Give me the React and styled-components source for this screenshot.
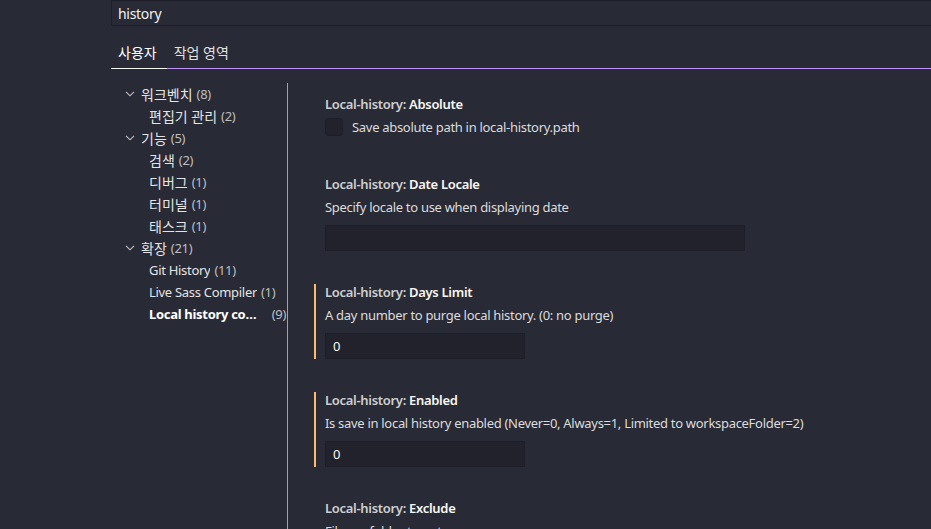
import styled, { createGlobalStyle } from 'styled-components'

const GlobalStyle = createGlobalStyle`
  html, body {
    margin: 0;
    padding: 0;
    background: #282a36;
  }
  * {
    box-sizing: border-box;
  }
`

const tree = [
  { label: '워크벤치', count: 8, level: 1, ko: true },
  { label: '편집기 관리', count: 2, level: 2, ko: true },
  { label: '기능', count: 5, level: 1, ko: true },
  { label: '검색', count: 2, level: 2, ko: true },
  { label: '디버그', count: 1, level: 2, ko: true },
  { label: '터미널', count: 1, level: 2, ko: true },
  { label: '태스크', count: 1, level: 2, ko: true },
  { label: '확장', count: 21, level: 1, ko: true },
  { label: 'Git History', count: 11, level: 2 },
  { label: 'Live Sass Compiler', count: 1, level: 2 },
  { label: 'Local history configuration', count: 9, level: 2, active: true },
]

function Chevron() {
  return (
    <ChevronIcon width="10" height="6" viewBox="0 0 10 6">
      <path d="M1 0.8 L5 4.8 L9 0.8" fill="none" stroke="#c5c5c5" strokeWidth="1.1" />
    </ChevronIcon>
  )
}

export default function App() {
  return (
    <Page>
      <GlobalStyle />
      <Header>
        <SearchBox>history</SearchBox>
        <Tabs>
          <Tab $active>사용자</Tab>
          <Tab>작업 영역</Tab>
        </Tabs>
      </Header>
      <Body>
        <Tree>
          {tree.map((item) => (
            <TreeRow key={item.label} $level={item.level}>
              {item.level === 1 && <Chevron />}
              <TreeLabel $active={item.active} $ko={item.ko}>
                {item.label}
              </TreeLabel>
              <TreeCount $spread={item.active}>({item.count})</TreeCount>
            </TreeRow>
          ))}
        </Tree>
        <Settings>
          <Item>
            <Title>
              Local-history: <b>Absolute</b>
            </Title>
            <CheckRow>
              <Checkbox />
              <Desc>Save absolute path in local-history.path</Desc>
            </CheckRow>
          </Item>
          <Item>
            <Title>
              Local-history: <b>Date Locale</b>
            </Title>
            <Desc>Specify locale to use when displaying date</Desc>
            <Input $wide />
          </Item>
          <Item $modified>
            <Title>
              Local-history: <b>Days Limit</b>
            </Title>
            <Desc>A day number to purge local history. (0: no purge)</Desc>
            <Input>0</Input>
          </Item>
          <Item $modified>
            <Title>
              Local-history: <b>Enabled</b>
            </Title>
            <Desc>Is save in local history enabled (Never=0, Always=1, Limited to workspaceFolder=2)</Desc>
            <Input>0</Input>
          </Item>
          <Item>
            <Title>
              Local-history: <b>Exclude</b>
            </Title>
            <Desc>Files or folder to not save</Desc>
          </Item>
        </Settings>
      </Body>
    </Page>
  )
}

const Page = styled.div`
  width: 931px;
  height: 529px;
  overflow: hidden;
  background: #282a36;
  font-family: 'Noto Sans', 'Noto Sans CJK KR', sans-serif;
  font-size: 13px;
  letter-spacing: -0.3px;
  color: #e6e6e6;
  display: flex;
  flex-direction: column;
`

const Header = styled.div`
  padding-left: 111px;
  display: flex;
  flex-direction: column;
`

const SearchBox = styled.div`
  height: 26px;
  border: 1px solid #1d1e27;
  border-right: none;
  padding: 0 6px;
  display: flex;
  align-items: center;
  font-size: 14px;
  color: #f0f0f0;
  width: 900px;
`

const Tabs = styled.div`
  display: flex;
  margin-top: 9px;
  border-bottom: 1px solid #bd93f9;
`

const Tab = styled.div`
  height: 34px;
  padding: 0 10px 0 7px;
  display: flex;
  align-items: center;
  font-size: 14px;
  letter-spacing: 0;
  color: ${(p) => (p.$active ? '#ffffff' : '#e2e2e2')};
  margin-bottom: -1px;
  border-bottom: 1px solid ${(p) => (p.$active ? '#f8f8f2' : 'transparent')};
`

const Body = styled.div`
  flex: 1;
  display: flex;
  min-height: 0;
`

const Tree = styled.div`
  width: 287px;
  padding: 14px 0 0 111px;
  display: flex;
  flex-direction: column;
`

const TreeRow = styled.div`
  height: 22px;
  display: flex;
  align-items: center;
  padding-left: ${(p) => (p.$level === 1 ? '14px' : '38px')};
  padding-right: 1px;
  white-space: nowrap;
`

const ChevronIcon = styled.svg`
  margin-right: 6px;
  flex: none;
`

const TreeLabel = styled.span`
  color: ${(p) => (p.$active ? '#ffffff' : '#e4e4e4')};
  font-weight: ${(p) => (p.$active ? 700 : 400)};
  font-size: ${(p) => (p.$ko ? '14px' : '13px')};
  letter-spacing: ${(p) => (p.$ko ? '0' : '-0.3px')};
  overflow: hidden;
  text-overflow: ellipsis;
  min-width: 0;
`

const TreeCount = styled.span`
  color: #bfbfbf;
  margin-left: ${(p) => (p.$spread ? '7px' : '4px')};
  flex: none;
`

const Settings = styled.div`
  flex: 1;
  border-left: 1px solid #b08ee6;
  margin-top: 14px;
  padding: 13px 0 0 26px;
  display: flex;
  flex-direction: column;
  gap: 33px;
`

const Item = styled.div`
  border-left: 2px solid ${(p) => (p.$modified ? '#ffb86c' : 'transparent')};
  padding-left: 9px;
  display: flex;
  flex-direction: column;
`

const Title = styled.div`
  height: 16px;
  line-height: 16px;
  font-weight: 600;
  color: #cfcfcf;
  b {
    color: #f8f8f2;
    font-weight: 600;
  }
`

const Desc = styled.div`
  margin-top: 6px;
  line-height: 18px;
  color: #dcdcdc;
  white-space: nowrap;
`

const CheckRow = styled.div`
  display: flex;
  align-items: center;
  margin-top: 6px;
  margin-bottom: 7px;
  ${Desc} {
    margin-top: 0;
    margin-left: 9px;
  }
`

const Checkbox = styled.div`
  width: 18px;
  height: 18px;
  border-radius: 3px;
  background: #21222c;
  border: 1px solid #1d1e27;
`

const Input = styled.div`
  margin-top: 9px;
  width: ${(p) => (p.$wide ? '420px' : '200px')};
  height: 26px;
  background: #21222c;
  border: 1px solid #1d1e27;
  padding: 0 7px;
  display: flex;
  align-items: center;
  color: #f8f8f2;
`
